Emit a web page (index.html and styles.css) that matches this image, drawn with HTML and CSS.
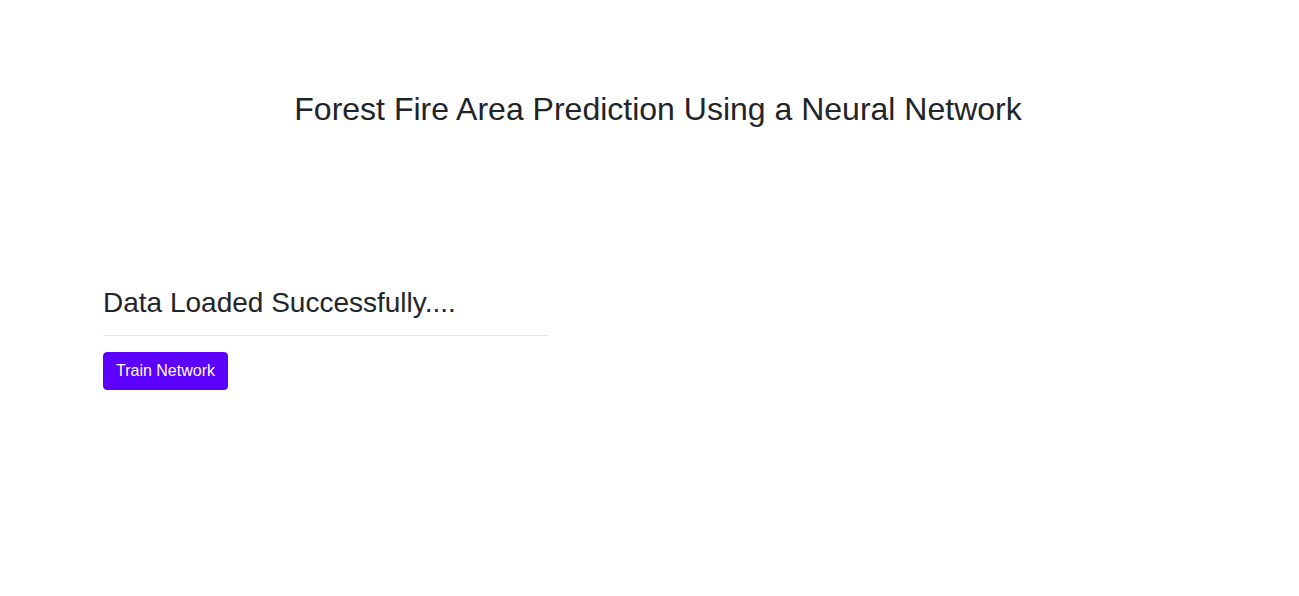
FILE: index.html
```html
<!DOCTYPE html>
<html>
<head>
<meta charset="utf-8">
<link rel="stylesheet" href="styles.css">
</head>
<body>
<div class="page">
  <h2 class="title">Forest Fire Area Prediction Using a Neural Network</h2>
  <div class="panel">
    <h3 class="status">Data Loaded Successfully....</h3>
    <hr class="rule">
    <button class="btn">Train Network</button>
  </div>
</div>
</body>
</html>
```
FILE: styles.css
```css
html, body {
  margin: 0;
  padding: 0;
  background: #fff;
}
body {
  font-family: "Liberation Sans", Arial, sans-serif;
  color: #212529;
  font-size: 16px;
  line-height: 1.5;
}
.page {
  padding: 90px 0 0 0;
}
.title {
  margin: 0;
  font-size: 32px;
  font-weight: 400;
  line-height: 1.2;
  text-align: center;
  padding-left: 17px;
}
.panel {
  width: 445px;
  margin: 158px 0 0 103px;
}
.status {
  margin: 0 0 8px 0;
  font-size: 28px;
  font-weight: 400;
  line-height: 1.2;
}
.rule {
  margin: 15px 0 16px 0;
  border: 0;
  border-top: 1px solid rgba(0, 0, 0, 0.1);
  height: 0;
}
.btn {
  display: inline-block;
  font-family: inherit;
  font-size: 16px;
  line-height: 1.5;
  padding: 6px 12px;
  border: 1px solid #5c00ff;
  background: #5c00ff;
  color: #fff;
  border-radius: 4px;
  cursor: pointer;
}
```
